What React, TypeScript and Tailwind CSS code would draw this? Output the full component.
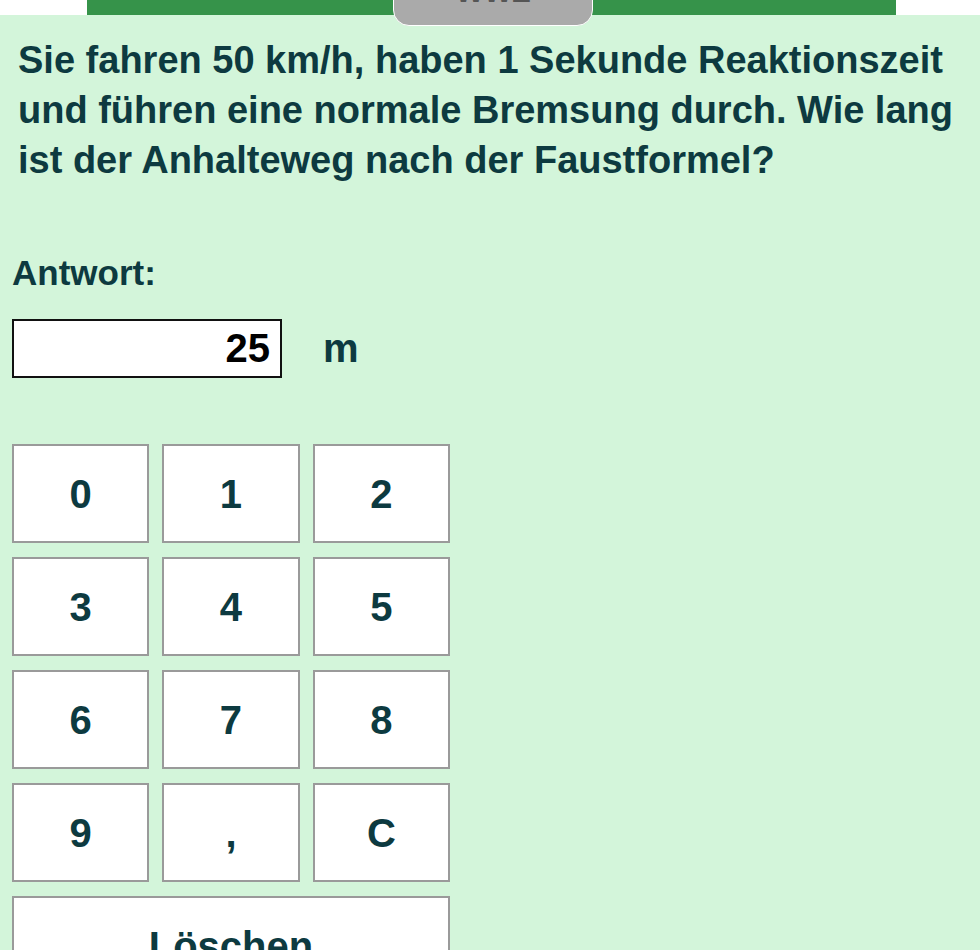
import React from 'react';

const keys = ['0', '1', '2', '3', '4', '5', '6', '7', '8', '9', ',', 'C'];

export default function App() {
  return (
    <div
      className="h-[950px] overflow-hidden bg-[#d3f5da] text-[#0d3a40]"
      style={{ fontFamily: '"Liberation Sans", Arial, sans-serif' }}
    >
      {/* Kopfleiste mit Reiter */}
      <div className="relative h-[15px] bg-white">
        <div className="ml-[87px] h-[15px] w-[809px] bg-[#36934a]" />
        <div className="absolute left-[393px] top-[-22px] flex h-[48px] w-[200px] items-start justify-center overflow-hidden rounded-[16px] border border-white bg-[#aaaaaa]">
          <span className="mt-[-2px] text-[30px] font-bold leading-none text-[#555]">WWZ</span>
        </div>
      </div>

      {/* Frage */}
      <div className="px-[18px] pt-[20px] text-[38px] font-bold leading-[50px]">
        Sie fahren 50 km/h, haben 1 Sekunde Reaktionszeit und führen eine normale Bremsung durch. Wie lang ist der Anhalteweg nach der Faustformel?
      </div>

      <div className="mt-[63px] px-[12px] text-[35px] font-bold leading-[50px]">Antwort:</div>

      {/* Eingabe */}
      <div className="mt-[20px] flex items-center px-[12px]">
        <div className="flex h-[59px] w-[270px] items-center justify-end border-2 border-[#111] bg-white pr-[10px] text-[40px] font-bold text-black">
          25
        </div>
        <span className="ml-[41px] text-[40px] font-bold">m</span>
      </div>

      {/* Ziffernblock */}
      <div className="mt-[66px] ml-[12px] grid w-[438px] grid-cols-3 gap-x-[13px] gap-y-[14px]">
        {keys.map((k) => (
          <button
            key={k}
            className="flex h-[99px] items-center justify-center border-2 border-[#9a9a9a] bg-white text-[40px] font-bold text-[#0d3a40]"
          >
            {k}
          </button>
        ))}
        <button className="col-span-3 flex h-[99px] items-center justify-center border-2 border-[#9a9a9a] bg-white text-[40px] font-bold text-[#0d3a40]">
          Löschen
        </button>
      </div>
    </div>
  );
}
